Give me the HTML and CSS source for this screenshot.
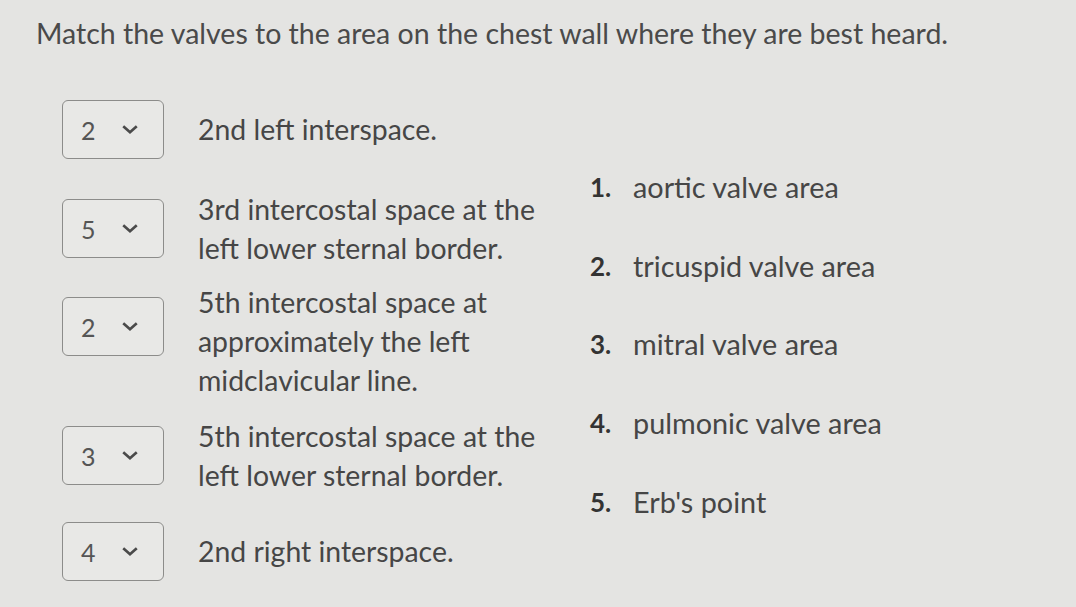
FILE: index.html
```html
<html lang="en">
	<head>
		<meta charset="utf-8" />
		<meta name="viewport" content="width=device-width, initial-scale=1" />
		<title>Matching question</title>
		<link rel="stylesheet" href="styles.css">
	</head>

	<body>
		<h2 class="prompt">Match the valves to the area on the chest wall where they are best heard.</h2>

		<div class="question">
			<div class="pairs">
				<div class="pair single">
					<div class="pick"><span>2</span><svg viewBox="0 0 14 8"><path d="M1 1.2 7 6.4 13 1.2" /></svg></div>
					<div class="clue">2nd left interspace.</div>
				</div>

				<div class="pair two">
					<div class="pick"><span>5</span><svg viewBox="0 0 14 8"><path d="M1 1.2 7 6.4 13 1.2" /></svg></div>
					<div class="clue">3rd intercostal space at the<br />left lower sternal border.</div>
				</div>

				<div class="pair three">
					<div class="pick"><span>2</span><svg viewBox="0 0 14 8"><path d="M1 1.2 7 6.4 13 1.2" /></svg></div>
					<div class="clue">5th intercostal space at<br />approximately the left<br />midclavicular line.</div>
				</div>

				<div class="pair two">
					<div class="pick"><span>3</span><svg viewBox="0 0 14 8"><path d="M1 1.2 7 6.4 13 1.2" /></svg></div>
					<div class="clue">5th intercostal space at the<br />left lower sternal border.</div>
				</div>

				<div class="pair single last">
					<div class="pick"><span>4</span><svg viewBox="0 0 14 8"><path d="M1 1.2 7 6.4 13 1.2" /></svg></div>
					<div class="clue">2nd right interspace.</div>
				</div>
			</div>

			<ol class="answers">
				<li><span class="num">1.</span>aortic valve area</li>
				<li><span class="num">2.</span>tricuspid valve area</li>
				<li><span class="num">3.</span>mitral valve area</li>
				<li><span class="num">4.</span>pulmonic valve area</li>
				<li><span class="num">5.</span>Erb's point</li>
			</ol>
		</div>
	</body>
</html>
```

FILE: styles.css
```css
body {
	margin: 0;
	background: #e4e4e2;
	font-family: Lato, 'Open Sans', sans-serif;
	color: #464646;
}

.prompt {
	margin: 0;
	padding: 18px 0 0 36px;
	font-size: 28.5px;
	font-weight: 400;
	line-height: 30px;
	color: #4a4a4a;
}

.question {
	display: flex;
	padding: 52px 0 0 62px;
}

.pairs {
	width: 528px;
}

.pair {
	display: flex;
	align-items: flex-start;
	gap: 34px;
}

.pair.single {
	align-items: center;
}

.pair.two {
	margin-top: 31px;
}

.pair.three {
	margin-top: 15px;
}

.pair.two .pick {
	margin-top: 9px;
}

.pair.three .pick {
	margin-top: 14px;
}

.pair.three + .pair.two {
	margin-top: 17px;
}

.pair.last {
	margin-top: 27px;
}

.pick {
	flex: none;
	display: flex;
	align-items: center;
	box-sizing: border-box;
	width: 102px;
	height: 59px;
	padding-left: 18px;
	border: 1.5px solid #8c8c8a;
	border-radius: 6px;
	background: #e8e8e6;
	font-size: 25px;
	color: #555;
}

.pick svg {
	width: 16px;
	height: 9px;
	margin-left: 26px;
	fill: none;
	stroke: #4a4a4a;
	stroke-width: 2.4;
}

.clue {
	font-size: 28.4px;
	line-height: 39px;
}

.answers {
	list-style: none;
	margin: 0;
	padding: 68px 0 0 0;
}

.answers li {
	display: flex;
	font-size: 28.8px;
	line-height: 39px;
	margin-bottom: 39.7px;
}

.answers .num {
	width: 43px;
	color: #333;
	font-weight: 700;
	font-size: 26px;
}
```
